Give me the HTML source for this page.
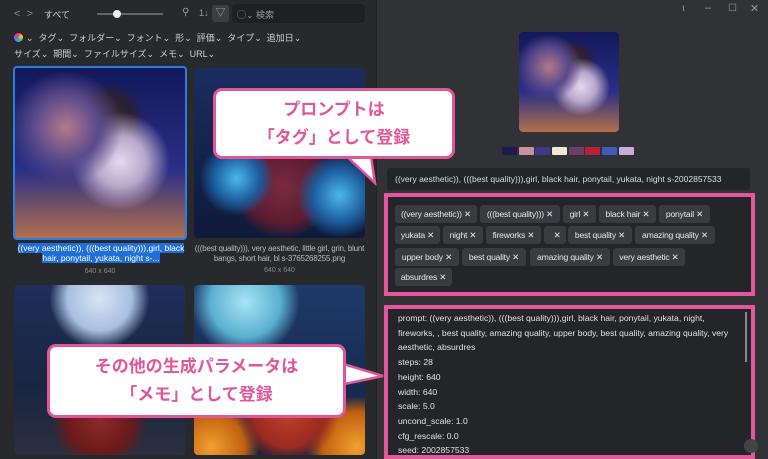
<!DOCTYPE html>
<html><head><meta charset="utf-8"><style>
*{box-sizing:border-box;margin:0;padding:0}
body{width:768px;height:459px;overflow:hidden;background:#313236;font-family:"Liberation Sans","Noto Sans CJK JP",sans-serif;position:relative;color:#ddd}
.abs{position:absolute}
#left{left:0;top:0;width:376px;height:459px;background:#28292d}
.tb{font-size:9px;color:#cfd0d4;white-space:nowrap}
.img{border-radius:4px;overflow:hidden}
.tag{position:absolute;background:#3a3b40;border-radius:3px;font-size:8.6px;color:#e6e6e6;height:18px;line-height:18px;text-align:center;white-space:nowrap;letter-spacing:-0.2px}
.memo div{font-size:8.6px;line-height:14.7px;color:#e2e2e2}
.callout{background:#fff;border:3px solid #e25798;border-radius:9px;color:#e25798;font-weight:bold;text-align:center;font-size:17px;line-height:28px}
.sw{display:inline-block;width:15px;height:8px;margin-right:1.7px;border-radius:1px}
</style></head><body>
<div id="left" class="abs"></div>
<div class="abs tb" style="left:14px;top:8px;font-size:11px;color:#888">&lt;&nbsp;&nbsp;&gt;</div>
<div class="abs tb" style="left:44px;top:8px;font-size:9px">すべて</div>
<div class="abs" style="left:97px;top:13px;width:66px;height:2px;background:#666"></div>
<div class="abs" style="left:113px;top:10px;width:8px;height:8px;border-radius:50%;background:#eee"></div>
<div class="abs tb" style="left:182px;top:7px;font-size:10px;color:#999">⚲</div>
<div class="abs tb" style="left:199px;top:8px;font-size:9px;color:#999">1↓</div>
<div class="abs" style="left:212px;top:5px;width:17px;height:17px;background:#3d3e43;border-radius:3px;color:#aaa;font-size:10px;text-align:center;line-height:17px">▽</div>
<div class="abs" style="left:232px;top:4px;width:133px;height:19px;background:#1f2023;border-radius:4px"></div>
<div class="abs tb" style="left:237px;top:8px;color:#999">◯⌄ 検索</div>
<div class="abs" style="left:14px;top:33px;width:9px;height:9px;border-radius:50%;background:conic-gradient(#f44,#fc3,#3c6,#39f,#a4f,#f44)"></div>
<div class="abs tb" style="left:26px;top:31px">⌄ &nbsp;タグ⌄ &nbsp;フォルダー⌄ &nbsp;フォント⌄ &nbsp;形⌄ &nbsp;評価⌄ &nbsp;タイプ⌄ &nbsp;追加日⌄</div>
<div class="abs tb" style="left:14px;top:47px">サイズ⌄ &nbsp;期間⌄ &nbsp;ファイルサイズ⌄ &nbsp;メモ⌄ &nbsp;URL⌄</div>
<div class="abs" style="left:376px;top:0;width:1px;height:459px;background:#202124"></div>
<div class="abs img" style="left:13px;top:66px;width:174px;height:174px;border:2px solid #2f7ce0;background:radial-gradient(circle at 30% 35%,#b37a8a 0,#5a4a8a 20%,transparent 35%),radial-gradient(circle at 62% 55%,#e6d9ee 0,#b9a7c9 18%,transparent 35%),radial-gradient(circle at 55% 30%,#3a2a30 0,#2a2030 15%,transparent 25%),linear-gradient(#12185a,#2b2f86 60%,#b0704a)"></div>
<div class="abs" style="left:17px;top:243px;width:168px;font-size:8.5px;line-height:10px;text-align:center;color:#fff"><span style="background:#1f6fd6">((very aesthetic)), (((best quality))),girl, black hair, ponytail, yukata, night s-...</span></div>
<div class="abs" style="left:14px;top:268px;width:172px;font-size:7px;text-align:center;color:#888">640 x 640</div>
<div class="abs img" style="left:194px;top:68px;width:171px;height:170px;background:radial-gradient(circle at 25% 65%,#4ab8e8 0,#1b5a9a 14%,transparent 22%),radial-gradient(circle at 85% 75%,#4ab8e8 0,#1b5a9a 14%,transparent 22%),radial-gradient(circle at 52% 70%,#7a2a40 0,#5a1c30 25%,transparent 35%),linear-gradient(#1a2d5e,#0e1a3a)"></div>
<div class="abs" style="left:190px;top:244px;width:179px;font-size:8px;line-height:10px;text-align:center;color:#bbb;letter-spacing:-0.2px">(((best quality))), very aesthetic, little girl, grin, blunt bangs, short hair, bl s-3765268255.png</div>
<div class="abs" style="left:194px;top:267px;width:171px;font-size:7px;text-align:center;color:#888">640 x 640</div>
<div class="abs img" style="left:14px;top:285px;width:171px;height:170px;background:radial-gradient(circle at 50% 8%,#d8e4f4 0,#a8bfe0 18%,transparent 28%),radial-gradient(circle at 50% 80%,#8a2a2a 0,#6a1a1a 20%,transparent 30%),linear-gradient(#1e2e5a,#1a2540 60%,#2a3040)"></div>
<div class="abs img" style="left:194px;top:285px;width:171px;height:170px;background:radial-gradient(circle at 30% 10%,#a8e4f4 0,#5ab0d0 18%,transparent 28%),radial-gradient(circle at 55% 75%,#c0402a 0,#9a2a20 22%,transparent 32%),radial-gradient(circle at 10% 95%,#f0a030 0,#c06010 15%,transparent 22%),radial-gradient(circle at 95% 95%,#f0a030 0,#c06010 15%,transparent 22%),linear-gradient(#1e3a6a,#142040)"></div>
<div class="abs tb" style="left:682px;top:3px;color:#999;font-size:10px">ı</div>
<div class="abs tb" style="left:705px;top:2px;color:#999;font-size:11px">–</div>
<div class="abs tb" style="left:728px;top:3px;color:#999;font-size:10px">☐</div>
<div class="abs tb" style="left:750px;top:2px;color:#999;font-size:11px">✕</div>
<div class="abs img" style="left:519px;top:32px;width:100px;height:100px;background:radial-gradient(circle at 30% 35%,#b37a8a 0,#5a4a8a 20%,transparent 35%),radial-gradient(circle at 62% 55%,#e6d9ee 0,#b9a7c9 18%,transparent 35%),radial-gradient(circle at 55% 30%,#3a2a30 0,#2a2030 15%,transparent 25%),linear-gradient(#12185a,#2b2f86 60%,#b0704a)"></div>
<div class="abs" style="left:502px;top:147px;white-space:nowrap;font-size:0"><span class="sw" style="background:#1c1b4e"></span><span class="sw" style="background:#c9909f"></span><span class="sw" style="background:#3d3b85"></span><span class="sw" style="background:#f3e6d3"></span><span class="sw" style="background:#6f3e68"></span><span class="sw" style="background:#b8203a"></span><span class="sw" style="background:#3f5bb8"></span><span class="sw" style="background:#c8addb"></span></div>
<div class="abs" style="left:387px;top:168px;width:363px;height:22px;background:#242528;border-radius:3px;font-size:8.5px;line-height:22px;padding-left:8px;color:#ddd;white-space:nowrap">((very aesthetic)), (((best quality))),girl, black hair, ponytail, yukata, night s-2002857533</div>
<div class="abs" style="left:384px;top:193px;width:371px;height:103px;border:4px solid #e3589b;background:#242528"></div>
<div class="tag" style="left:395px;top:205px;width:82px">((very aesthetic)) ✕</div>
<div class="tag" style="left:480px;top:205px;width:80px">(((best quality))) ✕</div>
<div class="tag" style="left:563px;top:205px;width:33px">girl ✕</div>
<div class="tag" style="left:599px;top:205px;width:57px">black hair ✕</div>
<div class="tag" style="left:659px;top:205px;width:51px">ponytail ✕</div>
<div class="tag" style="left:395px;top:226px;width:45px">yukata ✕</div>
<div class="tag" style="left:443px;top:226px;width:40px">night ✕</div>
<div class="tag" style="left:486px;top:226px;width:55px">fireworks ✕</div>
<div class="tag" style="left:544px;top:226px;width:22px">&nbsp;&nbsp;✕</div>
<div class="tag" style="left:568px;top:226px;width:64px">best quality ✕</div>
<div class="tag" style="left:635px;top:226px;width:80px">amazing quality ✕</div>
<div class="tag" style="left:395px;top:248px;width:64px">upper body ✕</div>
<div class="tag" style="left:462px;top:248px;width:64px">best quality ✕</div>
<div class="tag" style="left:530px;top:248px;width:80px">amazing quality ✕</div>
<div class="tag" style="left:613px;top:248px;width:72px">very aesthetic ✕</div>
<div class="tag" style="left:395px;top:268px;width:57px">absurdres ✕</div>
<div class="abs memo" style="left:384px;top:305px;width:371px;height:154px;border:4px solid #e3589b;background:#242528;padding:2px 0 0 10px">
<div>prompt: ((very aesthetic)), (((best quality))),girl, black hair, ponytail, yukata, night,<br>fireworks, , best quality, amazing quality, upper body, best quality, amazing quality, very<br>aesthetic, absurdres</div><div>steps: 28</div><div>height: 640</div><div>width: 640</div><div>scale: 5.0</div><div>uncond_scale: 1.0</div><div>cfg_rescale: 0.0</div><div>seed: 2002857533</div></div>
<div class="abs" style="left:745px;top:312px;width:2px;height:50px;background:#888"></div>
<div class="abs" style="left:744px;top:439px;width:14px;height:14px;border-radius:50%;background:#444"></div>
<svg class="abs" style="left:0;top:0" width="768" height="459"><polygon points="340,150 375,183 370,150" fill="#fff" stroke="#e25798" stroke-width="2.5"/><polygon points="340,363 383,376 340,385" fill="#fff" stroke="#e25798" stroke-width="2.5"/></svg>
<div class="abs callout" style="left:213px;top:88px;width:242px;height:71px;padding-top:5px">プロンプトは<br>「タグ」として登録</div>
<div class="abs callout" style="left:47px;top:344px;width:299px;height:74px;padding-top:6px">その他の生成パラメータは<br>「メモ」として登録</div>
</body></html>
